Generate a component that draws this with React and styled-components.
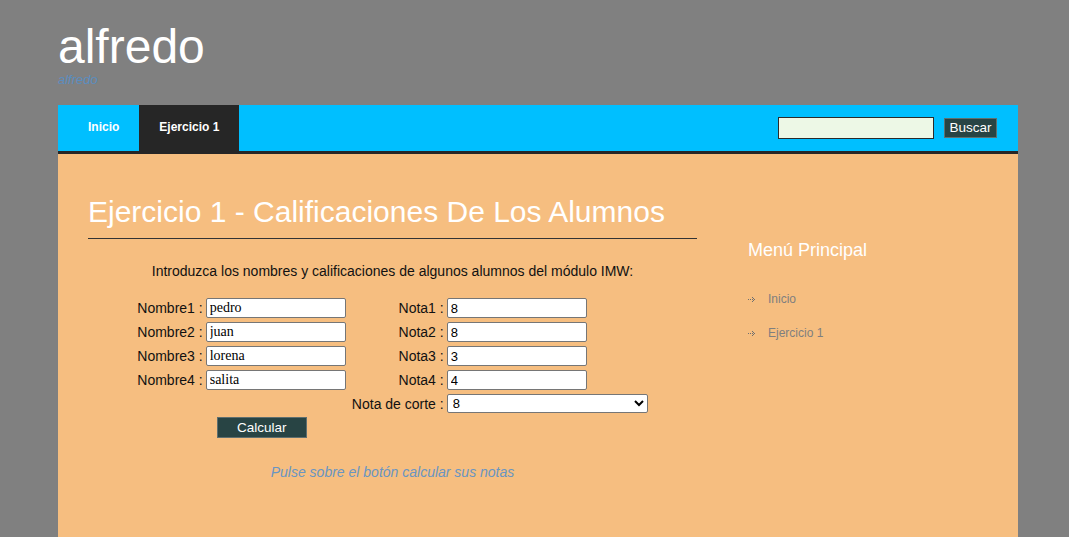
import styled, { createGlobalStyle } from "styled-components";

const Global = createGlobalStyle`
  html, body {
    margin: 0;
    padding: 0;
    background: #808080;
    font-family: "Liberation Sans", Arial, sans-serif;
  }
`;

const Page = styled.div`
  width: 960px;
  margin-left: 58px;
`;

const Header = styled.header`
  height: 105px;
  box-sizing: border-box;
  padding-top: 22px;
`;

const SiteTitle = styled.h1`
  margin: 0;
  font-size: 48px;
  font-weight: normal;
  line-height: 50px;
  color: #fff;
`;

const SiteSlogan = styled.div`
  font-size: 13px;
  font-style: italic;
  color: #5b8dbf;
  line-height: 14px;
  margin-top: 1px;
`;

const NavBar = styled.nav`
  height: 46px;
  background: #00bfff;
  border-bottom: 3px solid #262626;
  display: flex;
  align-items: stretch;
  padding-left: 10px;
`;

const Tab = styled.a`
  display: flex;
  align-items: center;
  padding: 0 20px 3px;
  font-size: 12px;
  font-weight: bold;
  color: #fff;
  text-decoration: none;
  background: ${(p) => (p.active ? "#262626" : "transparent")};
  margin-left: ${(p) => (p.first ? "-10px" : "0")};
  padding-left: ${(p) => (p.first ? "30px" : "20px")};
`;

const Search = styled.form`
  margin-left: auto;
  margin-right: 21px;
  display: flex;
  align-items: center;
  gap: 10px;
  padding-bottom: 1px;
`;

const SearchInput = styled.input`
  width: 156px;
  height: 22px;
  box-sizing: border-box;
  background: #edf8e6;
  border: 1px solid #2b2b2b;
  padding: 0 4px;
`;

const DarkButton = styled.button`
  background: #284444;
  color: #fff;
  border: 1px solid #5f6f6f;
  font-family: "Liberation Sans", Arial, sans-serif;
  font-size: 13.5px;
  height: ${(p) => p.h || 20}px;
  width: ${(p) => p.w}px;
  padding: 0;
  cursor: pointer;
`;

const Content = styled.div`
  background: #f6be80;
  min-height: 383px;
  display: flex;
  padding: 0 30px;
`;

const Main = styled.main`
  width: 609px;
  padding-top: 40px;
`;

const PageTitle = styled.h2`
  margin: 0;
  font-size: 30px;
  font-weight: normal;
  color: #fff;
  line-height: 36px;
  padding-bottom: 8px;
  border-bottom: 1px solid #333;
`;

const Intro = styled.p`
  margin: 24px 0 0;
  text-align: center;
  font-size: 14px;
  color: #111;
`;

const FormGrid = styled.div`
  margin: 19px auto 0;
  width: max-content;
  display: grid;
  grid-template-columns: auto 140px 95px 201px;
  column-gap: 3px;
  row-gap: 4px;
  align-items: center;
  font-size: 14px;
  color: #111;
`;

const Label = styled.label`
  text-align: right;
  white-space: nowrap;
  grid-column: ${(p) => p.col || "auto"};
`;

const Field = styled.input`
  width: 140px;
  height: 20px;
  box-sizing: border-box;
  border: 1px solid #767676;
  border-radius: 2px;
  background: #fff;
  padding: 0 3px;
  font-family: ${(p) =>
    p.serif ? '"Liberation Serif", "Times New Roman", serif' : '"Liberation Sans", Arial, sans-serif'};
  font-size: ${(p) => (p.serif ? 14 : 13)}px;
  color: #000;
`;

const Select = styled.select`
  width: 201px;
  height: 19px;
  border: 1px solid #767676;
  border-radius: 2px;
  background: #fff;
  font-family: "Liberation Sans", Arial, sans-serif;
  font-size: 13px;
  padding: 0 1px;
`;

const ButtonCell = styled.div`
  grid-column: 2;
  display: flex;
  justify-content: flex-start;
  padding-left: 11px;
`;

const Hint = styled.p`
  margin: 26px 0 0;
  text-align: center;
  font-size: 14px;
  font-style: italic;
  color: #6995c2;
`;

const Sidebar = styled.aside`
  margin-left: 51px;
  padding-top: 84px;
  width: 240px;
`;

const SideTitle = styled.h3`
  margin: 0;
  font-size: 18px;
  font-weight: normal;
  color: #fff;
  line-height: 24px;
`;

const SideList = styled.ul`
  list-style: none;
  margin: 20px 0 0;
  padding: 0;
`;

const SideItem = styled.li`
  display: flex;
  align-items: center;
  height: 34px;
  font-size: 12px;
  color: #7f7f7f;
  svg {
    margin-right: 13px;
  }
`;

const Bullet = () => (
  <svg width="7" height="5" viewBox="0 0 7 5">
    <g fill="#6f6f6f">
      <rect x="0" y="2" width="1" height="1" />
      <rect x="2" y="2" width="1" height="1" />
      <rect x="4" y="2" width="1" height="1" />
      <rect x="6" y="2" width="1" height="1" />
      <rect x="4" y="0" width="1" height="1" />
      <rect x="5" y="1" width="1" height="1" />
      <rect x="5" y="3" width="1" height="1" />
      <rect x="4" y="4" width="1" height="1" />
    </g>
  </svg>
);

const alumnos = [
  { n: "pedro", nota: "8" },
  { n: "juan", nota: "8" },
  { n: "lorena", nota: "3" },
  { n: "salita", nota: "4" },
];

export default function App() {
  return (
    <>
      <Global />
      <Page>
        <Header>
          <SiteTitle>alfredo</SiteTitle>
          <SiteSlogan>alfredo</SiteSlogan>
        </Header>
        <NavBar>
          <Tab first href="#">Inicio</Tab>
          <Tab active href="#">Ejercicio 1</Tab>
          <Search onSubmit={(e) => e.preventDefault()}>
            <SearchInput type="text" />
            <DarkButton w={53} h={20}>Buscar</DarkButton>
          </Search>
        </NavBar>
        <Content>
          <Main>
            <PageTitle>Ejercicio 1 - Calificaciones De Los Alumnos</PageTitle>
            <Intro>Introduzca los nombres y calificaciones de algunos alumnos del módulo IMW:</Intro>
            <FormGrid>
              {alumnos.flatMap((a, i) => [
                <Label key={"l" + i}>Nombre{i + 1} :</Label>,
                <Field key={"f" + i} serif defaultValue={a.n} />,
                <Label key={"m" + i}>Nota{i + 1} :</Label>,
                <Field key={"g" + i} defaultValue={a.nota} />,
              ])}
              <Label col="3">Nota de corte :</Label>
              <Select defaultValue="8">
                {[0, 1, 2, 3, 4, 5, 6, 7, 8, 9, 10].map((v) => (
                  <option key={v} value={String(v)}>{v}</option>
                ))}
              </Select>
              <ButtonCell>
                <DarkButton w={90} h={21}>Calcular</DarkButton>
              </ButtonCell>
            </FormGrid>
            <Hint>Pulse sobre el botón calcular sus notas</Hint>
          </Main>
          <Sidebar>
            <SideTitle>Menú Principal</SideTitle>
            <SideList>
              <SideItem><Bullet />Inicio</SideItem>
              <SideItem><Bullet />Ejercicio 1</SideItem>
            </SideList>
          </Sidebar>
        </Content>
      </Page>
    </>
  );
}
